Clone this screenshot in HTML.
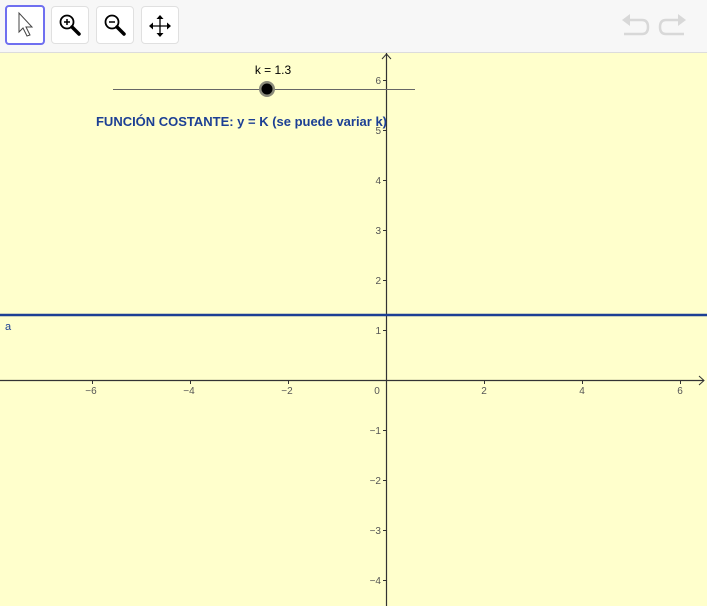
<!DOCTYPE html>
<html><head><meta charset="utf-8"><style>
html,body{margin:0;padding:0;width:707px;height:606px;overflow:hidden;background:#ffffcc;font-family:"Liberation Sans",sans-serif}
#tb{position:absolute;left:0;top:0;width:707px;height:52px;background:#f7f7f7;border-bottom:1px solid #dcdcdc}
.b{position:absolute;top:6px;width:38px;height:38px;border:1px solid #e0e0e0;border-radius:4px;background:#fff;box-sizing:border-box}
</style></head><body>
<div id="tb">
<div class="b" style="left:5px;border:2px solid #6f6ff0;width:40px;height:40px;top:5px"></div>
<div class="b" style="left:51px"></div>
<div class="b" style="left:96px"></div>
<div class="b" style="left:141px"></div>
<svg width="707" height="52" style="position:absolute;left:0;top:0">
<path d="M19 13 L19 32 L23 28 L27 36 L30 35 L26 27 L32 27 Z" fill="#fff" stroke="#444" stroke-width="1"/>
<circle cx="67" cy="22" r="6.5" fill="none" stroke="#000" stroke-width="1.8"/>
<path d="M64 22h6M67 19v6" stroke="#000" stroke-width="1.5"/>
<path d="M72 27 L79 34" stroke="#000" stroke-width="3.5" stroke-linecap="round"/>
<circle cx="112" cy="22" r="6.5" fill="none" stroke="#000" stroke-width="1.8"/>
<path d="M109 22h6" stroke="#000" stroke-width="1.5"/>
<path d="M117 27 L124 34" stroke="#000" stroke-width="3.5" stroke-linecap="round"/>
<path d="M160 16v20M150 26h20" stroke="#000" stroke-width="1.3"/>
<path d="M160 15l-3.5 4h7zM160 37l-3.5-4h7zM149 26l4-3.5v7zM171 26l-4-3.5v7z" fill="#000"/>
<path d="M628 20 L642 20 Q648 20 648 27 Q648 34 642 34 L624 34" fill="none" stroke="#d8d8d8" stroke-width="2.5"/>
<path d="M622 20 L630 14 L630 26 Z" fill="#d8d8d8"/>
<path d="M680 20 L666 20 Q660 20 660 27 Q660 34 666 34 L684 34" fill="none" stroke="#d8d8d8" stroke-width="2.5"/>
<path d="M686 20 L678 14 L678 26 Z" fill="#d8d8d8"/>
</svg>
</div>
<svg width="707" height="553" viewBox="0 53 707 553" style="position:absolute;left:0;top:53px" font-family="Liberation Sans, sans-serif">
<line x1="0" y1="380.5" x2="704" y2="380.5" stroke="#333" stroke-width="1.2"/>
<path d="M699 376 L704 380.5 L699 385" fill="none" stroke="#333"/>
<line x1="386.5" y1="53" x2="386.5" y2="606" stroke="#333" stroke-width="1.2"/>
<path d="M382 59 L386.5 54 L391 59" fill="none" stroke="#333"/>
<g stroke="#333">
<line x1="92.5" y1="380" x2="92.5" y2="384"/><line x1="190.5" y1="380" x2="190.5" y2="384"/><line x1="288.5" y1="380" x2="288.5" y2="384"/>
<line x1="484.5" y1="380" x2="484.5" y2="384"/><line x1="582.5" y1="380" x2="582.5" y2="384"/><line x1="680.5" y1="380" x2="680.5" y2="384"/>
<line x1="383" y1="80.5" x2="387" y2="80.5"/><line x1="383" y1="130.5" x2="387" y2="130.5"/><line x1="383" y1="180.5" x2="387" y2="180.5"/>
<line x1="383" y1="230.5" x2="387" y2="230.5"/><line x1="383" y1="280.5" x2="387" y2="280.5"/><line x1="383" y1="330.5" x2="387" y2="330.5"/>
<line x1="383" y1="430.5" x2="387" y2="430.5"/><line x1="383" y1="480.5" x2="387" y2="480.5"/><line x1="383" y1="530.5" x2="387" y2="530.5"/><line x1="383" y1="580.5" x2="387" y2="580.5"/>
</g>
<g font-size="10" fill="#555" text-anchor="middle">
<text x="91" y="394">−6</text><text x="189" y="394">−4</text><text x="287" y="394">−2</text>
<text x="484" y="394">2</text><text x="582" y="394">4</text><text x="680" y="394">6</text>
<text x="377" y="394">0</text>
</g>
<g font-size="10" fill="#555" text-anchor="end">
<text x="381" y="84">6</text><text x="381" y="134">5</text><text x="381" y="184">4</text><text x="381" y="234">3</text>
<text x="381" y="284">2</text><text x="381" y="334">1</text><text x="381" y="434">−1</text><text x="381" y="484">−2</text>
<text x="381" y="534">−3</text><text x="381" y="584">−4</text>
</g>
<line x1="0" y1="315" x2="707" y2="315" stroke="#1c3f94" stroke-width="2.5"/>
<text x="5" y="330" font-size="11" fill="#1c3f94">a</text>
<line x1="113" y1="89.5" x2="415" y2="89.5" stroke="#666" stroke-width="1"/>
<circle cx="267" cy="89" r="8" fill="#8a8a7a"/>
<circle cx="267" cy="89" r="5.5" fill="#000"/>
<text x="273" y="74" font-size="12" fill="#000" text-anchor="middle">k = 1.3</text>
<text x="96" y="126" font-size="13" font-weight="bold" fill="#1c3f94" textLength="291" lengthAdjust="spacingAndGlyphs">FUNCIÓN COSTANTE: y = K (se puede variar k)</text>
</svg>
</body></html>
